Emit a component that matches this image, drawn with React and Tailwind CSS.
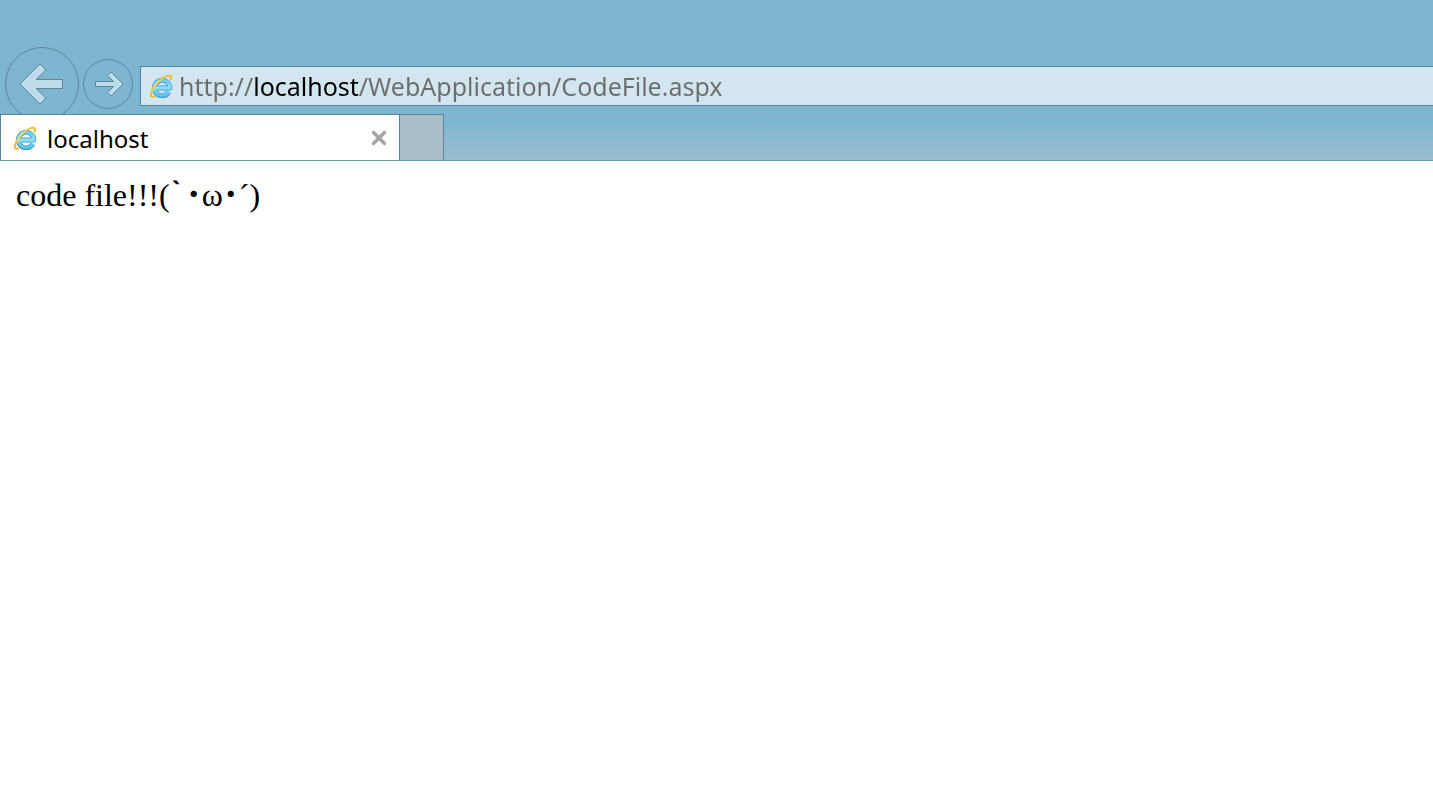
import React, { useState } from "react";

const IeIcon = () => (
  <svg viewBox="0 0 24 24" className="w-6 h-6 shrink-0" aria-hidden="true">
    <defs>
      <linearGradient id="ieBlue" x1="0" y1="3" x2="0" y2="24" gradientUnits="userSpaceOnUse">
        <stop offset="0" stopColor="#5cc0ee" />
        <stop offset="0.5" stopColor="#8fe0fa" />
        <stop offset="1" stopColor="#4db9ec" />
      </linearGradient>
      <linearGradient id="ieGold" x1="2" y1="22" x2="22" y2="2" gradientUnits="userSpaceOnUse">
        <stop offset="0" stopColor="#f2b624" />
        <stop offset="0.5" stopColor="#fddc55" />
        <stop offset="1" stopColor="#f7ba10" />
      </linearGradient>
    </defs>
    <g fill="none" strokeLinejoin="round">
      <path
        d="M7 14H20.900A7.800 7.800 0 1 0 19.800 18"
        stroke="#3a8fc9"
        strokeWidth="4.800"
      />
      <path
        d="M7 14H20.900A7.800 7.800 0 1 0 19.900 17.600"
        stroke="url(#ieBlue)"
        strokeWidth="3.400"
      />
      <path
        d="M5.800 22.200C2.800 23.700 1.300 22.300 2 19.200C3.500 12.800 12 3.500 18.500 1.900C21.800 1.100 22.800 2.800 21.600 5.500"
        stroke="url(#ieGold)"
        strokeWidth="1.900"
        strokeLinecap="round"
      />
    </g>
  </svg>
);

const BackIcon = () => (
  <svg viewBox="0 0 74 74" className="w-full h-full" aria-hidden="true">
    <circle cx="37" cy="37" r="36.500" fill="none" stroke="#5a889d" />
    <path
      d="M15 37L35 17l6 6-10 9.500h26.500v9H31L41 51l-6 6z"
      fill="#bddbe8"
      stroke="#5a889d"
      strokeLinejoin="round"
    />
  </svg>
);

const ForwardIcon = () => (
  <svg viewBox="0 0 50 50" className="w-full h-full" aria-hidden="true">
    <circle cx="25" cy="25" r="24.500" fill="none" stroke="#5a889d" />
    <path
      d="M40 25L28 13l-3.500 3.500 6 6h-18v5h18l-6 6L28 37z"
      fill="#bddbe8"
      stroke="#5a889d"
      strokeLinejoin="round"
    />
  </svg>
);

const Toolbar = () => {
  const [url, setUrl] = useState("http://localhost/WebApplication/CodeFile.aspx");

  return (
    <nav className="flex h-[67px] items-start pl-[5px]">
      <button aria-label="Back" className="w-[74px] h-[74px] shrink-0">
        <BackIcon />
      </button>
      <button aria-label="Forward" className="w-[50px] h-[50px] ml-1 mt-3 shrink-0">
        <ForwardIcon />
      </button>
      <form
        onSubmit={(e) => e.preventDefault()}
        className="flex flex-1 min-w-0 h-10 mt-[19px] ml-[7px] pl-2 gap-[6px] items-center bg-[#d3e6ef] border border-r-0 border-[#5a8497]"
      >
        <IeIcon />
        {/* the host part of the address is darker than the rest */}
        <input
          type="text"
          aria-label="Address"
          value={url}
          onChange={(e) => setUrl(e.target.value)}
          spellCheck={false}
          className="flex-1 min-w-0 h-9 pt-0.5 text-[25px] outline-none text-transparent caret-black bg-clip-text bg-[linear-gradient(90deg,#6d6d6d_75px,#000_75px,#000_180px,#6d6d6d_180px)]"
        />
      </form>
    </nav>
  );
};

const TabBar = () => (
  <div className="relative flex h-[47px] bg-linear-to-b from-[#7eb6d2] from-15% to-[#98bccf] border-b border-[#6699b5]">
    <div className="flex items-center w-[400px] pl-3 pr-[11px] gap-[10px] bg-white border border-b-0 border-[#5a8497]">
      <IeIcon />
      <span className="flex-1 pt-0.5 text-[24px] leading-8 text-black">localhost</span>
      <button aria-label="Close tab" className="w-[18px] h-[18px]">
        <svg viewBox="0 0 18 18" className="w-full h-full" aria-hidden="true">
          <path d="M3.500 3.500l11 11M14.500 3.500l-11 11" stroke="#a5a5a5" strokeWidth="3.500" strokeLinecap="round" />
        </svg>
      </button>
    </div>
    <button aria-label="New tab" className="w-11 bg-[#a9bec9] border-t border-r border-[#5a8497]"></button>
  </div>
);

const App = () => {
  return (
    <div className="min-h-screen bg-white font-['Noto_Sans','Noto_Sans_CJK_JP',sans-serif]">
      <header className="bg-[#7eb6d2] pt-[47px]">
        <Toolbar />
        <TabBar />
      </header>
      <main className="p-4 text-[32px] leading-9 text-black font-['Liberation_Serif','Noto_Sans_CJK_JP',serif]">
        code file!!!(<span className="mr-[3px] text-[26px] font-bold [font-feature-settings:'palt']">｀</span>
        <b>･</b>ω<b>･</b>´)
      </main>
    </div>
  );
};

export default App;
